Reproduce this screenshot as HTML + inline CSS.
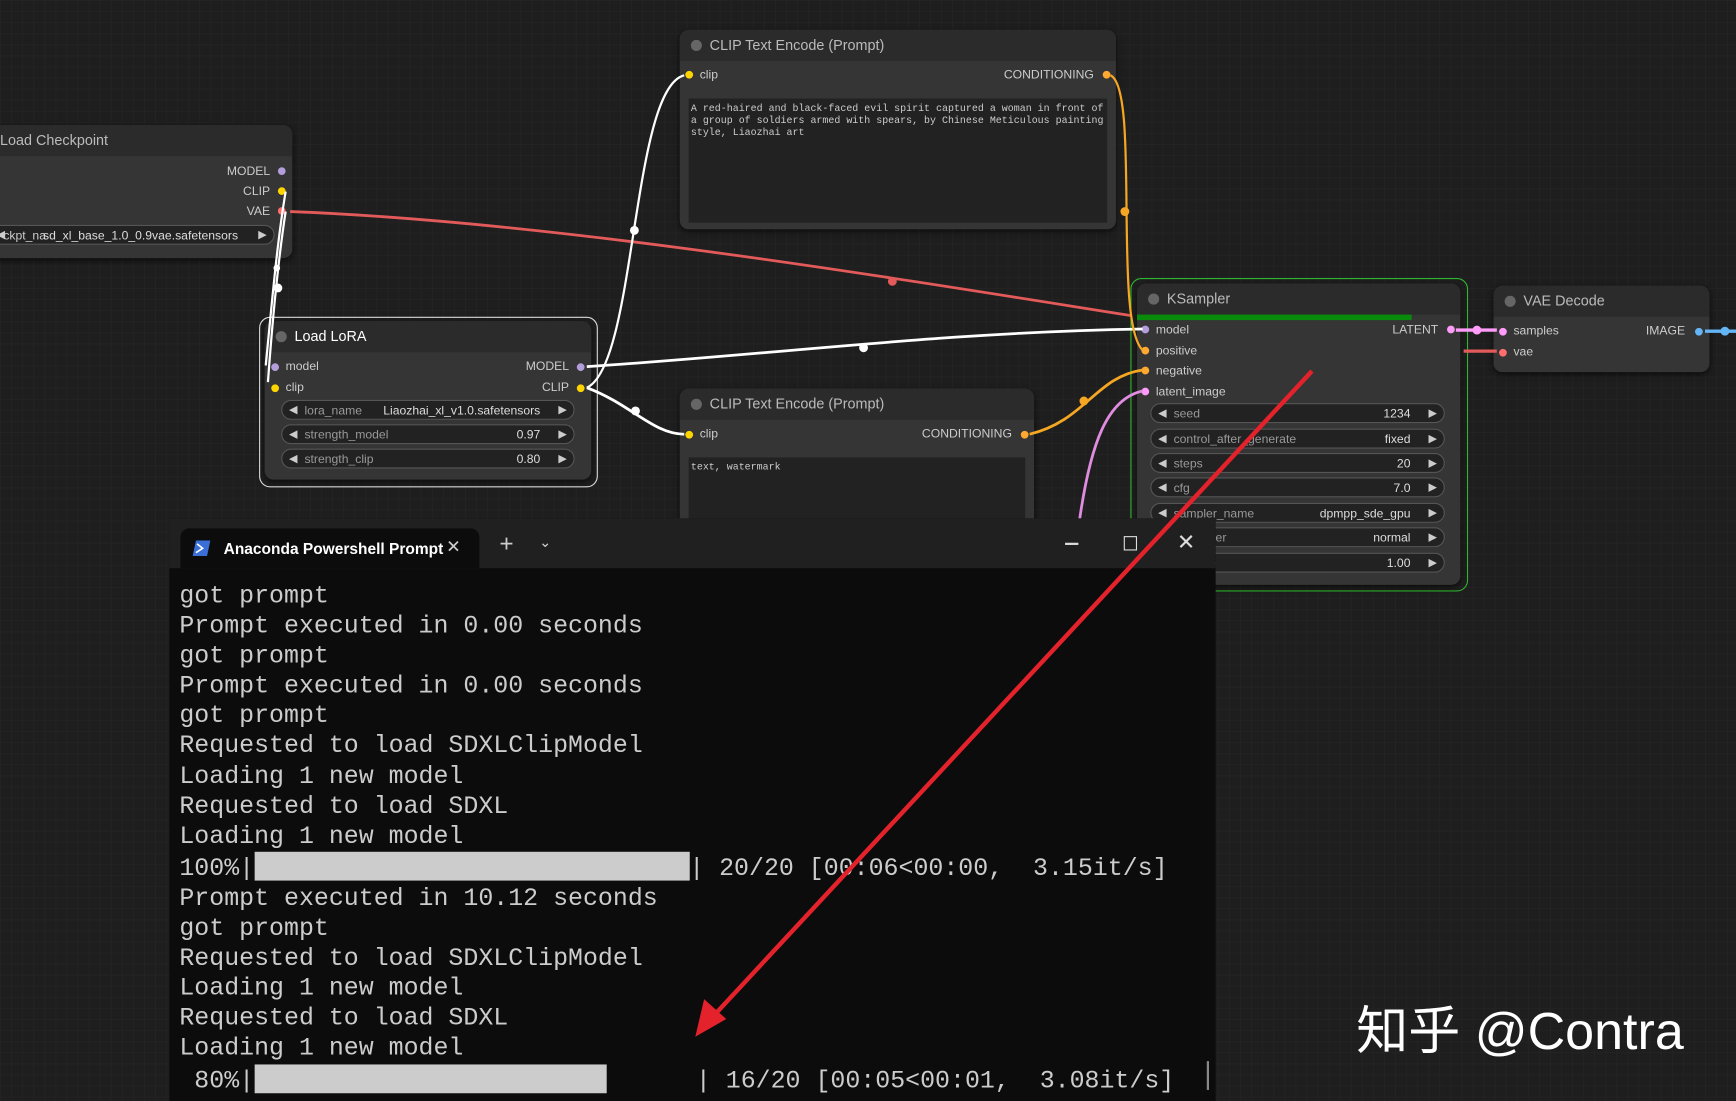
<!DOCTYPE html>
<html><head><meta charset="utf-8">
<style>
html,body{margin:0;padding:0;width:1736px;height:1101px;overflow:hidden;background:#1f1f1f;}
#w{position:absolute;left:0;top:0;width:1568px;height:994px;transform:scale(1.10714,1.10765);transform-origin:0 0;
background-color:#1e1e1e;background-image:linear-gradient(#232323 1px,transparent 1px),linear-gradient(90deg,#232323 1px,transparent 1px);background-size:10px 10px;
font-family:"Liberation Sans",Arial,sans-serif;color:#ddd;overflow:hidden;}
.n{position:absolute;background:#353535;border-radius:8px;box-shadow:0 2px 6px rgba(0,0,0,.6);}
.t{height:28px;background:#2b2b2b;border-radius:8px 8px 0 0;font-size:13px;color:#bbb;line-height:28px;padding-left:27px;position:relative;}
.t:before{content:"";position:absolute;left:10px;top:9px;width:10px;height:10px;border-radius:50%;background:#666;}
.t.nd:before{display:none}
.s{position:absolute;font-size:11px;color:#ccc;}
.d{position:absolute;width:7px;height:7px;border-radius:50%;}
.wd{position:absolute;height:18px;background:#222;border:1px solid #555;border-radius:9px;font-size:11px;line-height:18px;color:#999;box-sizing:border-box;}
.wd .l{position:absolute;left:20px}.wd .v{position:absolute;right:30px;color:#ddd}
.wd:before{content:"◀";position:absolute;left:6px;color:#ccc;font-size:10px}
.wd:after{content:"▶";position:absolute;right:6px;color:#ccc;font-size:10px}
.ta{position:absolute;background:#222;font-family:"Liberation Mono",monospace;font-size:9px;color:#ccc;padding:4px 2px;line-height:11px;box-sizing:border-box}
#term{position:absolute;left:153px;top:468px;width:945px;height:526px;background:#0c0c0c;}
#tb{height:45px;background:#202020;position:relative}
#tab{position:absolute;left:10px;top:9px;width:270px;height:36px;background:#0c0c0c;border-radius:8px 8px 0 0;font-size:14px;color:#fff;line-height:36px;}
#lines{position:absolute;left:9px;top:57px;font-family:"Liberation Mono",monospace;font-size:22.5px;color:#ccc;line-height:27.1px;white-space:pre;}
.bar{display:inline-block;background:#ccc;height:26px;vertical-align:-5px}
</style></head><body><div id="w">

<div class="n" style="left:-10px;top:113px;width:274px;height:120px">
<div class="t nd" style="padding-left:10px">Load Checkpoint</div>
<div class="s" style="right:20px;top:36px">MODEL</div><div class="d" style="right:6px;top:38px;background:#b39ddb"></div>
<div class="s" style="right:20px;top:54px">CLIP</div><div class="d" style="right:6px;top:56px;background:#ffd500"></div>
<div class="s" style="right:20px;top:72px">VAE</div><div class="d" style="right:6px;top:74px;background:#ff6e6e"></div>
<div class="wd" style="left:0;top:90px;width:258px;color:#ccc"><span style="position:absolute;left:12px">ckpt_na</span><span class="v" style="right:32px">sd_xl_base_1.0_0.9vae.safetensors</span></div>
</div>

<div class="n" style="left:614px;top:27px;width:394px;height:180px">
<div class="t">CLIP Text Encode (Prompt)</div>
<div class="d" style="left:5px;top:37px;background:#ffd500"></div><div class="s" style="left:18px;top:35px">clip</div>
<div class="s" style="right:20px;top:35px">CONDITIONING</div><div class="d" style="right:5px;top:37px;background:#ffa931"></div>
<div class="ta" style="left:8px;top:62px;width:378px;height:112px">A red-haired and black-faced evil spirit captured a woman in front of a group of soldiers armed with spears, by Chinese Meticulous painting style, Liaozhai art</div>
</div>

<div class="n" style="left:614px;top:351px;width:320px;height:130px">
<div class="t">CLIP Text Encode (Prompt)</div>
<div class="d" style="left:5px;top:38px;background:#ffd500"></div><div class="s" style="left:18px;top:35px">clip</div>
<div class="s" style="right:20px;top:35px">CONDITIONING</div><div class="d" style="right:5px;top:38px;background:#ffa931"></div>
<div class="ta" style="left:8px;top:62px;width:304px;height:70px">text, watermark</div>
</div>

<div style="position:absolute;left:234px;top:286px;width:304px;height:152px;border:1.5px solid #ddd;border-radius:10px"></div>
<div class="n" style="left:239px;top:290px;width:295px;height:143px">
<div class="t" style="color:#fff">Load LoRA</div>
<div class="d" style="left:6px;top:38px;background:#b39ddb"></div><div class="s" style="left:19px;top:35px">model</div>
<div class="s" style="right:20px;top:35px">MODEL</div><div class="d" style="right:6px;top:38px;background:#b39ddb"></div>
<div class="d" style="left:6px;top:57px;background:#ffd500"></div><div class="s" style="left:19px;top:54px">clip</div>
<div class="s" style="right:20px;top:54px">CLIP</div><div class="d" style="right:6px;top:57px;background:#ffd500"></div>
<div class="wd" style="left:15px;top:71px;width:265px"><span class="l">lora_name</span><span class="v">Liaozhai_xl_v1.0.safetensors</span></div>
<div class="wd" style="left:15px;top:93px;width:265px"><span class="l">strength_model</span><span class="v">0.97</span></div>
<div class="wd" style="left:15px;top:115px;width:265px"><span class="l">strength_clip</span><span class="v">0.80</span></div>
</div>

<div style="position:absolute;left:1021px;top:251px;width:303px;height:281px;border:1.5px solid #2eb82e;border-radius:10px"></div>
<div class="n" style="left:1027px;top:256px;width:292px;height:272px">
<div class="t">KSampler</div>
<div style="position:absolute;left:0;top:28px;width:248px;height:5px;background:#0a8a0a"></div>
<div class="d" style="left:4px;top:38px;background:#b39ddb"></div><div class="s" style="left:17px;top:36px">model</div>
<div class="s" style="right:20px;top:36px">LATENT</div><div class="d" style="right:5px;top:38px;background:#ff9cf9"></div>
<div class="d" style="left:4px;top:57px;background:#ffa931"></div><div class="s" style="left:17px;top:55px">positive</div>
<div class="d" style="left:4px;top:75px;background:#ffa931"></div><div class="s" style="left:17px;top:73px">negative</div>
<div class="d" style="left:4px;top:94px;background:#ff9cf9"></div><div class="s" style="left:17px;top:92px">latent_image</div>
<div class="wd" style="left:12px;top:108px;width:266px"><span class="l">seed</span><span class="v">1234</span></div>
<div class="wd" style="left:12px;top:131px;width:266px"><span class="l">control_after_generate</span><span class="v">fixed</span></div>
<div class="wd" style="left:12px;top:153px;width:266px"><span class="l">steps</span><span class="v">20</span></div>
<div class="wd" style="left:12px;top:175px;width:266px"><span class="l">cfg</span><span class="v">7.0</span></div>
<div class="wd" style="left:12px;top:198px;width:266px"><span class="l">sampler_name</span><span class="v">dpmpp_sde_gpu</span></div>
<div class="wd" style="left:12px;top:220px;width:266px"><span class="l">scheduler</span><span class="v">normal</span></div>
<div class="wd" style="left:12px;top:243px;width:266px"><span class="l">denoise</span><span class="v">1.00</span></div>
</div>

<div class="n" style="left:1349px;top:258px;width:195px;height:78px">
<div class="t">VAE Decode</div>
<div class="d" style="left:5px;top:38px;background:#ff9cf9"></div><div class="s" style="left:18px;top:35px">samples</div>
<div class="s" style="right:22px;top:35px">IMAGE</div><div class="d" style="right:6px;top:38px;background:#64b5f6"></div>
<div class="d" style="left:5px;top:57px;background:#ff6e6e"></div><div class="s" style="left:18px;top:54px">vae</div>
</div>

<svg style="position:absolute;left:0;top:0" width="1568" height="994" fill="none">
<path d="M262 191 C500 200,800 250,1022 285" stroke="#e35a5a" stroke-width="2.5"/><circle cx="806" cy="254" r="4" fill="#e35a5a"/>
<path d="M530 331 C700 320,850 300,1032 297" stroke="#fff" stroke-width="2.5"/><circle cx="780" cy="314" r="4" fill="#fff"/>
<path d="M530 350 C575 330,570 80,618 68" stroke="#fff" stroke-width="2"/><circle cx="573" cy="208" r="4" fill="#fff"/>
<path d="M530 350 C570 365,590 392,618 392" stroke="#fff" stroke-width="2.5"/><circle cx="574" cy="371" r="4" fill="#fff"/>
<path d="M258 173 C250 220,245 280,240 330 M258 191 C252 230,246 290,242 345" stroke="#fff" stroke-width="2"/><circle cx="251" cy="260" r="4" fill="#fff"/><circle cx="250" cy="242" r="3" fill="#fff"/>
<path d="M1003 68 C1030 80,1005 290,1032 316" stroke="#f5a623" stroke-width="2"/><circle cx="1016" cy="191" r="4" fill="#f5a623"/>
<path d="M930 392 C980 380,990 340,1032 334" stroke="#f5a623" stroke-width="2.5"/><circle cx="979" cy="362" r="4" fill="#f5a623"/>
<path d="M975 470 C985 400,1000 360,1032 353" stroke="#e08de0" stroke-width="2.5"/>
<path d="M1315 298 L1352 298" stroke="#ff9cf9" stroke-width="3"/><circle cx="1334" cy="298" r="4" fill="#ff9cf9"/>
<path d="M1322 317 L1352 317" stroke="#e35a5a" stroke-width="3"/>
<path d="M1540 299 L1568 299" stroke="#64b5f6" stroke-width="3"/><circle cx="1558" cy="299" r="4" fill="#64b5f6"/>
</svg>

<div id="term">
<div id="tb">
<div id="tab"><svg style="position:absolute;left:11px;top:11px" width="16" height="14"><path d="M3 0H16L13 14H0Z" fill="#3a6fd8"/><path d="M4 3L9 7L3 11" stroke="#fff" stroke-width="1.5" fill="none"/></svg><span style="position:absolute;left:39px;font-weight:bold;font-size:14px">Anaconda Powershell Prompt</span><span style="position:absolute;left:240px;color:#ccc;font-size:16px">✕</span></div>
<span style="position:absolute;left:298px;top:10px;color:#ccc;font-size:22px">+</span>
<span style="position:absolute;left:334px;top:14px;color:#ccc;font-size:13px">⌄</span>
<div style="position:absolute;left:809px;top:22px;width:12px;height:1.5px;background:#ddd"></div>
<div style="position:absolute;left:862px;top:16px;width:10px;height:11px;border:1.5px solid #ddd"></div>
<span style="position:absolute;left:910px;top:9px;color:#ddd;font-size:20px">✕</span>
</div>
<div id="lines">got prompt
Prompt executed in 0.00 seconds
got prompt
Prompt executed in 0.00 seconds
got prompt
Requested to load SDXLClipModel
Loading 1 new model
Requested to load SDXL
Loading 1 new model
100%|<span class="bar" style="width:393px"></span>| 20/20 [00:06&lt;00:00,  3.15it/s]
Prompt executed in 10.12 seconds
got prompt
Requested to load SDXLClipModel
Loading 1 new model
Requested to load SDXL
Loading 1 new model
 80%|<span class="bar" style="width:318px"></span>      | 16/20 [00:05&lt;00:01,  3.08it/s]</div>
<div style="position:absolute;left:937px;top:490px;width:2px;height:26px;background:#888"></div>
</div>

<svg style="position:absolute;left:0;top:0" width="1568" height="994">
<path d="M1185 335 L640 922" stroke="#e3222b" stroke-width="4"/>
<path d="M628 936 L636 902 L656 920 Z" fill="#e3222b"/>
</svg>

<div style="position:absolute;left:1225px;top:892px;font-size:47px;color:#fff;font-family:'Liberation Sans','Noto Sans CJK SC',sans-serif;white-space:nowrap">知乎 @Contra</div>
</div></body></html>
